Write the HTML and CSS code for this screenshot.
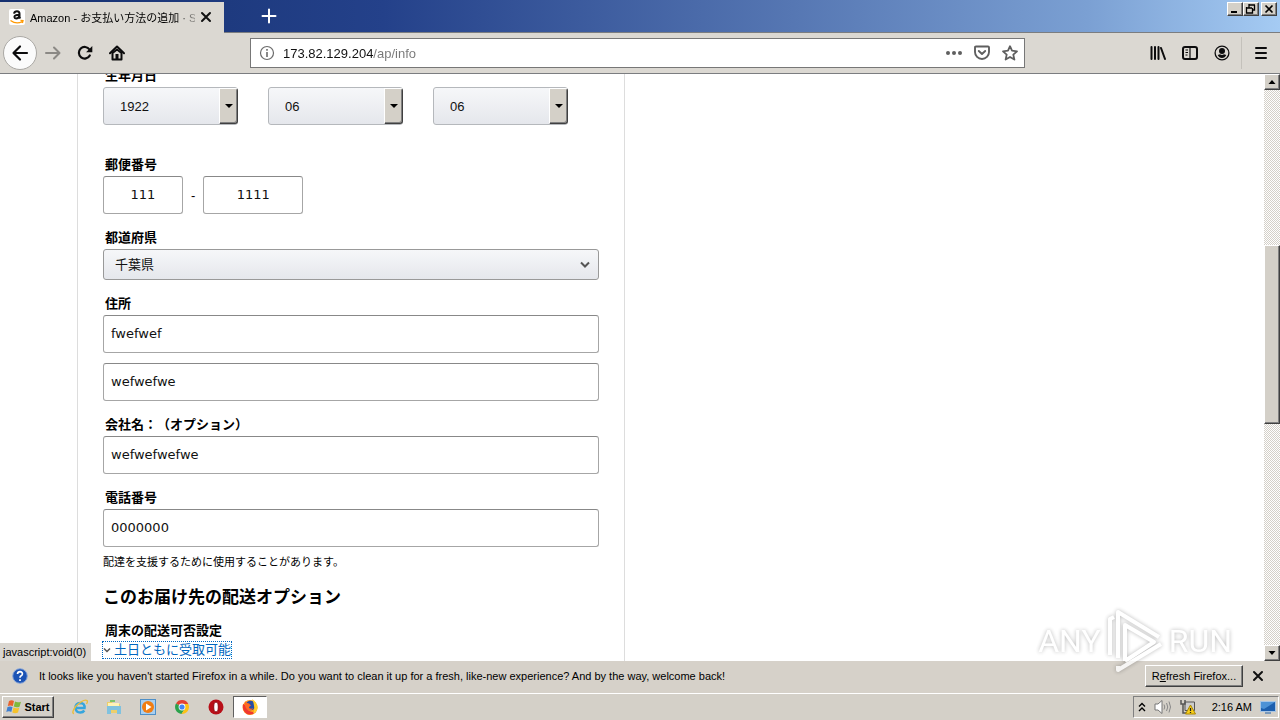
FILE: index.html
```html
<!DOCTYPE html>
<html lang="ja">
<head>
<meta charset="UTF-8">
<title>Amazon - お支払い方法の追加</title>
<link rel="stylesheet" href="styles.css">
</head>
<body>

<header class="titlebar">
    <div class="tab">
        <svg class="favicon" width="16" height="16" viewBox="0 0 16 16">
            <rect width="16" height="16" rx="2" fill="#fff"/>
            <path d="M5 4.600Q5.500 2.300 8 2.300Q10.500 2.300 10.500 4.800V8.300L11.300 9.600M10.300 5.800Q5.400 5.700 5.400 8Q5.500 9.600 7.300 9.500Q9.600 9.300 10.300 7" fill="none" stroke="#111" stroke-width="2"/>
            <path d="M1.500 11.500Q7.500 15.800 13.300 12.500M11.500 11.300L14 11.500L13.400 14" fill="none" stroke="#f90" stroke-width="1.300"/>
        </svg>
        <span class="tab-title">Amazon - お支払い方法の追加 · S</span>
        <button class="tab-close" aria-label="Close tab">
            <svg width="12" height="12" viewBox="0 0 12 12"><path d="M2 2L10 10M10 2L2 10" stroke="#111" stroke-width="2" stroke-linecap="round"/></svg>
        </button>
    </div>
    <button class="new-tab" aria-label="New tab">
        <svg width="16" height="16" viewBox="0 0 16 16"><path d="M8 1.500V14.500M1.500 8H14.500" stroke="#fff" stroke-width="2" stroke-linecap="round"/></svg>
    </button>
    <div class="window-buttons">
        <button class="win-btn" aria-label="Minimize"><svg width="14" height="12" viewBox="0 0 14 12"><path d="M3 9H9" stroke="#000" stroke-width="2"/></svg></button>
        <button class="win-btn" aria-label="Restore"><svg width="14" height="12" viewBox="0 0 14 12"><path d="M5 2H11M5 1V5M10.500 2V7H8M3 5H8M2.500 4V10H8.500V5" fill="none" stroke="#000" stroke-width="1.300"/></svg></button>
        <button class="win-btn win-close" aria-label="Close"><svg width="14" height="12" viewBox="0 0 14 12"><path d="M3.500 2.500L10.500 9.500M10.500 2.500L3.500 9.500" stroke="#000" stroke-width="1.700"/></svg></button>
    </div>
</header>

<nav class="toolbar">
    <div class="nav-buttons">
        <button class="tool back" aria-label="Back"><svg width="18" height="18" viewBox="0 0 18 18"><path d="M16 9H3M9 2.500L2.500 9L9 15.500" fill="none" stroke="#0c0c0d" stroke-width="2.200" stroke-linecap="round" stroke-linejoin="round"/></svg></button>
        <button class="tool" aria-label="Forward"><svg width="18" height="18" viewBox="0 0 18 18"><path d="M2 9H15M10 3.500L15.500 9L10 14.500" fill="none" stroke="#8b8985" stroke-width="2" stroke-linecap="round" stroke-linejoin="round"/></svg></button>
        <button class="tool" aria-label="Reload"><svg width="16" height="16" viewBox="0 0 16 16"><path d="M12.800 10.500A5.800 5.800 0 1 1 12.500 4.500" fill="none" stroke="#0c0c0d" stroke-width="2.200" stroke-linecap="round"/><path d="M15.300 1V7.200H9.100Z" fill="#0c0c0d"/></svg></button>
        <button class="tool" aria-label="Home"><svg width="16" height="16" viewBox="0 0 16 16"><path d="M1 8.300L8 1.500L15 8.300" fill="none" stroke="#0c0c0d" stroke-width="2" stroke-linecap="round" stroke-linejoin="round"/><path d="M3.500 8V14.500H12.500V8L8 4.500Z" fill="none" stroke="#0c0c0d" stroke-width="2" stroke-linejoin="round"/><path d="M6.500 9H9.500V14H6.500Z" fill="#0c0c0d"/></svg></button>
    </div>
    <div class="urlbar">
        <svg width="16" height="16" viewBox="0 0 16 16"><circle cx="8" cy="8" r="6.500" fill="none" stroke="#6b6b6b" stroke-width="1.200"/><path d="M8 7V12M8 4V5.800" stroke="#6b6b6b" stroke-width="1.600"/></svg>
        <input class="url" type="text" aria-label="Address" value="173.82.129.204/ap/info">
        <button class="url-btn" aria-label="Page actions"><svg width="16" height="16" viewBox="0 0 16 16" fill="#5f5f5f"><circle cx="2" cy="8" r="2"/><circle cx="8" cy="8" r="2"/><circle cx="14" cy="8" r="2"/></svg></button>
        <button class="url-btn" aria-label="Save to Pocket"><svg width="16" height="16" viewBox="0 0 16 16" fill="none" stroke="#5f5f5f" stroke-width="1.900" stroke-linecap="round" stroke-linejoin="round"><path d="M2 1.500H14Q15 1.500 15 2.500V7A7 7 0 0 1 1 7V2.500Q1 1.500 2 1.500Z"/><path d="M4.800 6L8 9L11.200 6"/></svg></button>
        <button class="url-btn" aria-label="Bookmark"><svg width="16" height="16" viewBox="0 0 16 16"><path d="M8 1.200L10 5.700L15 6.300L11.300 9.600L12.400 14.600L8 12L3.600 14.600L4.700 9.600L1 6.300L6 5.700Z" fill="none" stroke="#5f5f5f" stroke-width="1.800" stroke-linejoin="round"/></svg></button>
    </div>
    <div class="nav-tools">
        <button class="tool" aria-label="Library"><svg width="16" height="16" viewBox="0 0 16 16"><path d="M1.500 2V14M5 2V14M8.500 2V14M11 3L15 14" stroke="#0c0c0d" stroke-width="2" stroke-linecap="round"/></svg></button>
        <button class="tool" aria-label="Sidebars"><svg width="16" height="16" viewBox="0 0 16 16"><rect x="1" y="2" width="14" height="12" rx="2" fill="none" stroke="#0c0c0d" stroke-width="2"/><path d="M8 2V14M3.500 5H6M3.500 7.500H6M3.500 10H5.500" stroke="#0c0c0d" stroke-width="1.200"/></svg></button>
        <button class="tool" aria-label="Account"><svg width="16" height="16" viewBox="0 0 16 16"><circle cx="8" cy="8" r="6.900" fill="none" stroke="#0c0c0d" stroke-width="1.300"/><circle cx="8" cy="6" r="3" fill="#0c0c0d"/><path d="M3.700 10Q5.500 9.300 6 9.300Q8 10.500 10 9.300Q10.500 9.300 12.300 10Q11 13 8 13Q5 13 3.700 10Z" fill="#0c0c0d"/></svg></button>
    </div>
    <button class="tool menu" aria-label="Menu"><svg width="14" height="14" viewBox="0 0 14 14"><path d="M2 2H12M2 7H12M2 12H12" stroke="#0c0c0d" stroke-width="2" stroke-linecap="round"/></svg></button>
</nav>

<main class="viewport">
    <div class="page">
        <form class="card">
            <fieldset class="field birth">
                <legend class="label">生年月日</legend>
                <div class="birth-row">
                    <span class="old-select"><select aria-label="年"><option>1922</option></select></span>
                    <span class="old-select"><select aria-label="月"><option>06</option></select></span>
                    <span class="old-select"><select aria-label="日"><option>06</option></select></span>
                </div>
            </fieldset>

            <div class="field">
                <label class="label" for="zip1">郵便番号</label>
                <div class="zip-row">
                    <input class="text zip1" id="zip1" type="text" value="111">
                    <span>-</span>
                    <input class="text zip2" type="text" aria-label="郵便番号 下4桁" value="1111">
                </div>
            </div>

            <div class="field">
                <label class="label" for="pref">都道府県</label>
                <div class="pref">
                    <select id="pref"><option>千葉県</option></select>
                    <svg width="12" height="8" viewBox="0 0 12 8"><path d="M2 1.500L6 5.500L10 1.500" fill="none" stroke="#555" stroke-width="2"/></svg>
                </div>
            </div>

            <div class="field">
                <label class="label" for="addr1">住所</label>
                <input class="text" id="addr1" type="text" value="fwefwef">
                <input class="text" type="text" aria-label="住所2" value="wefwefwe">
            </div>

            <div class="field">
                <label class="label" for="company">会社名：（オプション）</label>
                <input class="text" id="company" type="text" value="wefwefwefwe">
            </div>

            <div class="field">
                <label class="label" for="tel">電話番号</label>
                <input class="text" id="tel" type="text" value="0000000">
                <p class="note">配達を支援するために使用することがあります。</p>
            </div>

            <h2>このお届け先の配送オプション</h2>
            <div class="label">周末の配送可否設定</div>
            <a class="weekend" href="javascript:void(0)"><svg width="8" height="8" viewBox="0 0 8 8"><path d="M1 2.500L4 5.500L7 2.500" fill="none" stroke="#555" stroke-width="1.500"/></svg>土日ともに受取可能</a>
        </form>
    </div>

    <div class="scrollbar">
        <button class="scroll-btn" aria-label="Scroll up"><svg width="8" height="4" viewBox="0 0 8 4"><path d="M0.500 4L4 0L7.500 4Z"/></svg></button>
        <div class="track"><div class="thumb"></div></div>
        <button class="scroll-btn" aria-label="Scroll down"><svg width="8" height="4" viewBox="0 0 8 4"><path d="M0.500 0L4 4L7.500 0Z"/></svg></button>
    </div>

    <div class="status">javascript:void(0)</div>
    <div class="watermark">
        <span>ANY</span>
        <svg width="60" height="64" viewBox="0 0 60 64" fill="none" stroke="#fff" stroke-width="4" stroke-linejoin="round">
            <path d="M5 46V10L9 8M13 49V3L54 28"/>
            <path d="M20 52V16L49 33L20 52"/>
            <path d="M13 57V61L56 35"/>
        </svg>
        <span>RUN</span>
    </div>
</main>

<div class="notice">
    <svg width="16" height="16" viewBox="0 0 16 16"><circle cx="8" cy="8" r="7.300" fill="#1b53b5" stroke="#89a6d8"/><path d="M5.500 6Q5.700 3.700 8 3.700Q10.500 3.800 10.400 6Q10.300 7.200 8.900 7.900Q8 8.500 8 9.700M8 11.200V13" fill="none" stroke="#fff" stroke-width="1.700"/></svg>
    <span class="notice-text">It looks like you haven't started Firefox in a while. Do you want to clean it up for a fresh, like-new experience? And by the way, welcome back!</span>
    <button class="refresh">R<u>e</u>fresh Firefox...</button>
    <button class="notice-close" aria-label="Close"><svg width="12" height="12" viewBox="0 0 12 12"><path d="M2 2L10 10M10 2L2 10" stroke="#111" stroke-width="2" stroke-linecap="round"/></svg></button>
</div>

<footer class="taskbar">
    <button class="start">
        <svg width="16" height="16" viewBox="0 0 16 16"><path d="M3 2Q5.500 0.500 8 2L6.800 7Q4.300 5.800 1.800 7Z" fill="#e8622c"/><path d="M9 2.500Q11.500 4 15 2.700L13.500 7.700Q10.500 9 7.800 7.500Z" fill="#7fb93c"/><path d="M1.500 8Q4 6.800 6.500 8L5.300 13Q3 11.700 0.300 13Z" fill="#3f7fd0"/><path d="M7.500 8.500Q10 10 13.200 8.800L12 13.500Q9 15 6.300 13.500Z" fill="#f5c22b"/></svg>
        Start
    </button>
    <div class="launchers">
        <button class="launch" aria-label="Internet Explorer"><svg width="18" height="18" viewBox="0 0 18 18"><path d="M4.500 10H13.500Q14 5 9.200 5Q4.500 5.200 4.500 10Q4.800 14.500 9.300 14.500Q12 14.500 13.300 12.500" fill="none" stroke="#35a5dd" stroke-width="2.500"/><path d="M3 15.500Q0 15 5 8Q13 0.500 16 2.500Q17 3.500 15.500 6" fill="none" stroke="#e9bd3d" stroke-width="1.400"/></svg></button>
        <button class="launch" aria-label="Explorer"><svg width="18" height="18" viewBox="0 0 18 18"><path d="M2 4H7L8 6H15V15H2Z" fill="#edcf6b"/><path d="M3 5H14V9H3Z" fill="#fff3b5"/><path d="M2 8H16V16H12V12H6V16H2Z" fill="#80c2df"/><path d="M5 2H10V4H5Z" fill="#7dc36b"/></svg></button>
        <button class="launch" aria-label="Media Player"><svg width="18" height="18" viewBox="0 0 18 18"><rect x="1.500" y="1.500" width="15" height="15" fill="#a9cff0" stroke="#4e8fc7"/><circle cx="9" cy="9" r="6" fill="#f17d13"/><path d="M7 5.500L12.500 9L7 12.500Z" fill="#fff"/></svg></button>
        <button class="launch" aria-label="Chrome"><svg width="18" height="18" viewBox="0 0 18 18"><path d="M9 9L3 5.500A7 7 0 0 1 15.300 6H9Z" fill="#e34133"/><path d="M9 9L3 5.500A7 7 0 0 0 8.500 16L12 10.500Z" fill="#2ba24c"/><path d="M9 6H15.300A7 7 0 0 1 8.500 16L12 10.500Z" fill="#fbc116"/><circle cx="9" cy="9" r="3.400" fill="#fff"/><circle cx="9" cy="9" r="2.600" fill="#4285f4"/></svg></button>
        <button class="launch" aria-label="Opera"><svg width="18" height="18" viewBox="0 0 18 18"><circle cx="9" cy="9" r="7.500" fill="#b80f18"/><ellipse cx="9" cy="9" rx="2.300" ry="5" fill="#fff" stroke="#8a0a12"/></svg></button>
        <button class="launch active" aria-label="Firefox"><svg width="18" height="18" viewBox="0 0 18 18"><circle cx="9" cy="9.500" r="7.500" fill="#ff9b1a"/><path d="M2 6Q1 13 6 16Q12 18 15.500 13Q11 15 7.500 12.500Q5 10 6 8Z" fill="#f0372f"/><circle cx="9.500" cy="7.500" r="4.800" fill="#284da5"/><path d="M4 3Q5 5 8 5.500L10 7.500Q7.500 8.500 8 10Q10 11.500 12.500 10Q10 14 6 11.500Q3 8 4 3Z" fill="#ff6a22"/><path d="M11 1Q17 5 16.500 11Q15 15 12 15.500Q15 9 11 1Z" fill="#ffd02f"/></svg></button>
    </div>
    <div class="tray">
        <svg width="8" height="10" viewBox="0 0 8 10"><path d="M1 4.500L4 1.500L7 4.500M1 9L4 6L7 9" fill="none" stroke="#000" stroke-width="1.400"/></svg>
        <svg width="18" height="16" viewBox="0 0 18 16"><path d="M1 5H4L8 1.500V14.500L4 11H1Z" fill="#fff" stroke="#777"/><path d="M10 5.500Q11.500 8 10 10.500M12.500 4Q15 8 12.500 12M15 2.500Q18 8 15 13.500" fill="none" stroke="#888"/></svg>
        <svg width="16" height="16" viewBox="0 0 16 16"><path d="M5 3H14.500V11.500H5Z" fill="#ccc" stroke="#555"/><path d="M1 1V5H5V1M3 5V14H7" fill="none" stroke="#555" stroke-width="1.500"/><path d="M10.500 6L15.500 15H5.500Z" fill="#f8ce17" stroke="#a98605"/><path d="M10.500 9V12M10.500 13V14" stroke="#222" stroke-width="1.300"/></svg>
        <time class="clock">2:16 AM</time>
        <svg width="16" height="14" viewBox="0 0 16 14"><rect x="0.500" y="1.500" width="15" height="10" fill="#1d5fae" stroke="#a8c5e4"/><path d="M1 2H15L4 9L1 8Z" fill="#4d92d6"/><path d="M5 13H11" stroke="#7a99ba" stroke-width="2"/></svg>
    </div>
</footer>

</body>
</html>
```
FILE: styles.css
```css
*{
    box-sizing:border-box;
}

body{
    margin:0;
    height:100vh;
    display:flex;
    flex-direction:column;
    overflow:hidden;
    background:#fff;
    color:#000;
    font-family:"Liberation Sans","Noto Sans CJK JP",sans-serif;
    font-size:11px;
}

button{
    display:flex;
    align-items:center;
    justify-content:center;
    padding:0;
    border:none;
    background:none;
    color:#000;
    font:inherit;
}

svg{
    flex:none;
    display:block;
}

/* window title and tabs */
.titlebar{
    flex:none;
    display:flex;
    align-items:flex-start;
    height:33px;
    background:linear-gradient(to right,#15306f 0%,#24418a 30%,#5677b3 62%,#7ba0d3 85%,#a5cbf3 100%);
    border-bottom:1px solid #7b7d80;
}

.tab{
    display:flex;
    align-items:center;
    width:224px;
    height:31px;
    margin-top:2px;
    padding:0 12px 2px 9px;
    background:#dbd8d2;
}

.tab-title{
    flex:1;
    margin-left:5px;
    overflow:hidden;
    white-space:nowrap;
    -webkit-mask-image:linear-gradient(to right,#000 88%,transparent 105%);
    mask-image:linear-gradient(to right,#000 88%,transparent 105%);
}

.tab-close{
    margin-left:5px;
}

.new-tab{
    width:34px;
    height:32px;
    margin-left:28px;
}

.window-buttons{
    display:flex;
    margin:2px 3px 0 auto;
}

.win-btn,
.scroll-btn,
.thumb,
.start,
.refresh{
    background:#d4d0c8;
    border:1px solid;
    border-color:#fff #404040 #404040 #fff;
    box-shadow:inset -1px -1px #808080;
}

.win-btn{
    width:16px;
    height:14px;
}

.win-close{
    margin-left:2px;
}

/* navigation toolbar */
.toolbar{
    flex:none;
    display:flex;
    align-items:center;
    height:41px;
    background:#dbd8d2;
    border-bottom:1px solid #7b7d80;
}

.nav-buttons{
    flex:1 1 250px;
    display:flex;
    align-items:center;
    padding-left:3px;
}

.tool{
    width:32px;
    height:32px;
}

.back{
    width:34px;
    height:34px;
    border:1px solid #aaa8a4;
    border-radius:50%;
    background:#fbfbfb;
}

.urlbar{
    flex:3 1 775px;
    display:flex;
    align-items:center;
    gap:12px;
    height:30px;
    padding:0 6px 0 8px;
    background:#fff;
    border:1px solid #777;
}

/* the host is darker than the path */
.url{
    flex:1;
    min-width:0;
    margin-left:-4px;
    padding:0;
    border:none;
    outline:none;
    font:13px "Liberation Sans",sans-serif;
    color:transparent;
    background:linear-gradient(to right,#111 90px,#777 90px);
    -webkit-background-clip:text;
    background-clip:text;
}

.nav-tools{
    flex:1 1 216px;
    display:flex;
    justify-content:flex-end;
    padding-right:3px;
}

.menu{
    width:39px;
    border-left:1px solid #c4c1bb;
}

/* page area */
.viewport{
    flex:1;
    min-height:0;
    display:flex;
    position:relative;
}

.page{
    flex:1;
    overflow:hidden;
    font-size:13px;
}

.card{
    max-width:548px;
    margin:-9px 0 0 77px;
    padding:0 25px 20px;
    border:solid #ddd;
    border-width:0 1px;
}

.field{
    margin:0 0 13px;
    padding:0;
    border:none;
}

.birth{
    margin-bottom:29px;
}

.label{
    display:block;
    padding:0 0 0 2px;
    margin-bottom:2px;
    line-height:20px;
    font-family:"Noto Sans CJK JP",sans-serif;
    font-weight:bold;
    text-spacing-trim:space-all;
}

.birth-row{
    display:flex;
    gap:30px;
}

select{
    appearance:none;
    display:block;
    width:100%;
    border:1px solid #b5b8bc;
    border-radius:3px;
    background:linear-gradient(#f6f7f9,#e5e7ec);
    color:#111;
    font-family:inherit;
    font-size:13px;
    outline:none;
}

.old-select{
    position:relative;
    width:135px;
}

.old-select select{
    height:38px;
    padding:0 16px;
}

/* raised arrow button at the right end */
.old-select::before{
    content:"";
    position:absolute;
    top:1px;
    right:0;
    bottom:1px;
    width:17px;
    background:#d4d0c8;
    border:1px solid;
    border-color:#fff #404040 #404040 #fff;
    border-radius:0 3px 3px 0;
    box-shadow:inset -1px -1px #808080;
    pointer-events:none;
}

.old-select::after{
    content:"";
    position:absolute;
    top:17px;
    right:5px;
    border:4px solid transparent;
    border-top-color:#000;
    border-bottom:none;
    pointer-events:none;
}

.text{
    display:block;
    width:100%;
    height:38px;
    padding:0 7px 2px;
    border:1px solid #a6a6a6;
    border-top-color:#888;
    border-radius:3px;
    background:#fff;
    color:#111;
    font:13px "DejaVu Sans",sans-serif;
    outline:none;
}

.text + .text{
    margin-top:10px;
}

.zip-row{
    display:flex;
    align-items:center;
    gap:8px;
}

.zip-row .text{
    margin:0;
    text-align:center;
}

.zip1{
    width:80px;
}

.zip2{
    width:100px;
}

.pref{
    position:relative;
}

.pref select{
    height:31px;
    padding:0 11px;
    border-color:#999;
}

.pref svg{
    position:absolute;
    top:12px;
    right:8px;
    pointer-events:none;
}

.note{
    margin:6px 0 15px;
    font-size:11px;
    line-height:18px;
}

h2{
    margin:0 0 10px;
    font-size:17px;
    line-height:24px;
}

.weekend{
    display:inline-flex;
    align-items:center;
    gap:3px;
    line-height:16px;
    color:#0066c0;
    text-decoration:none;
    outline:1px dotted #0066c0;
}

.scrollbar{
    flex:none;
    width:16px;
    display:flex;
    flex-direction:column;
}

.scroll-btn{
    width:16px;
    height:16px;
}

.track{
    flex:1;
    display:flex;
    flex-direction:column;
    background:repeating-conic-gradient(#fff 0 25%,#d4d0c8 0 50%) 0 0/2px 2px;
}

.track::before{
    content:"";
    flex:28;
}

.track::after{
    content:"";
    flex:40;
}

.thumb{
    flex:32;
}

.status{
    position:absolute;
    left:0;
    bottom:0;
    padding:0 5px 0 3px;
    line-height:18px;
    background:#d9d6d0;
}

.watermark{
    position:absolute;
    right:48px;
    bottom:-12px;
    z-index:1;
    display:flex;
    align-items:center;
    gap:4px;
    color:#fff;
    font:32px Roboto,sans-serif;
    filter:drop-shadow(0 0 2px rgba(0,0,0,0.35));
    opacity:0.8;
    pointer-events:none;
}

/* firefox notification bar */
.notice{
    flex:none;
    display:flex;
    align-items:center;
    height:32px;
    padding:0 16px 2px 12px;
    background:#d6d1c9;
}

.notice-text{
    flex:1;
    margin-left:11px;
    white-space:nowrap;
}

.refresh{
    width:98px;
    height:22px;
}

.notice-close{
    margin-left:9px;
}

/* windows taskbar */
.taskbar{
    flex:none;
    display:flex;
    align-items:center;
    height:27px;
    padding:0 1px 0 2px;
    background:#d4d0c8;
    border-top:1px solid #fff;
}

.start{
    gap:2px;
    width:52px;
    height:22px;
    font-weight:bold;
}

.launchers{
    flex:1;
    display:flex;
    margin-left:9px;
}

.launch{
    width:34px;
    height:22px;
}

.active{
    background:#fff;
    border:1px solid;
    border-color:#606060 #fff #fff #606060;
}

.tray{
    display:flex;
    align-items:center;
    gap:8px;
    height:22px;
    padding:0 2px 0 4px;
    border:1px solid;
    border-color:#808080 #fff #fff #808080;
}

.clock{
    margin-left:8px;
}
```
